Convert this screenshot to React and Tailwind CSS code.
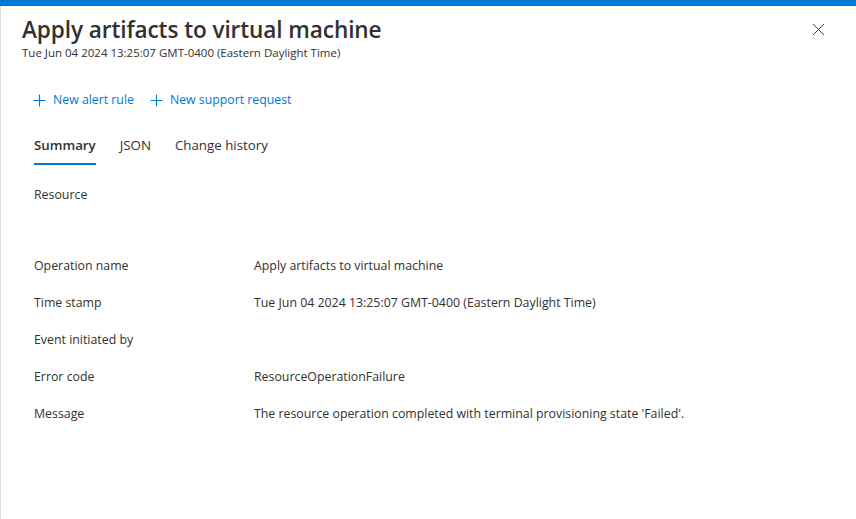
import { X, Plus } from 'lucide-react';

const ROWS = [
  ['Operation name', 'Apply artifacts to virtual machine'],
  ['Time stamp', 'Tue Jun 04 2024 13:25:07 GMT-0400 (Eastern Daylight Time)'],
  ['Event initiated by', ''],
  ['Error code', 'ResourceOperationFailure'],
  ['Message', "The resource operation completed with terminal provisioning state 'Failed'."],
];

export default function App() {
  return (
    <div className="w-[856px] h-[519px] overflow-hidden bg-white text-[#323130]" style={{ fontFamily: '"Open Sans", "Noto Sans", sans-serif' }}>
      <div className="h-[6px] bg-[#0078d4]" />
      <div className="h-[513px] border-l border-[#e1dfdd] flex flex-col">
        {/* header */}
        <div className="flex items-start justify-between pl-[21px] pr-[27px] pt-[9px]">
          <div>
            <h1 className="text-[22.6px] leading-[30px] font-semibold tracking-[-0.1px]">Apply artifacts to virtual machine</h1>
            <div className="text-[11.5px] leading-[14px] mt-[1px] text-[#323130]">Tue Jun 04 2024 13:25:07 GMT-0400 (Eastern Daylight Time)</div>
          </div>
          <button className="mt-[4px] text-[#323130]">
            <X size={21} strokeWidth={1.05} />
          </button>
        </div>

        {/* commands */}
        <div className="flex items-center gap-[13px] pl-[29px] mt-[31px] text-[12.3px] text-[#0078d4]">
          <span className="flex items-center gap-[4px]"><Plus size={19} strokeWidth={1.4} />New alert rule</span>
          <span className="flex items-center gap-[4px]"><Plus size={19} strokeWidth={1.4} />New support request</span>
        </div>

        {/* tabs */}
        <div className="flex gap-[24px] pl-[33px] mt-[26px] text-[13.3px]">
          <div className="font-semibold pb-[7px] border-b-2 border-[#0078d4]">Summary</div>
          <div className="pb-[7px]">JSON</div>
          <div className="pb-[7px]">Change history</div>
        </div>

        {/* summary */}
        <div className="pl-[33px] text-[12.35px]">
          <div className="mt-[21px] leading-[18px]">Resource</div>
          <div className="mt-[53px] flex flex-col gap-[19px]">
            {ROWS.map(([label, value]) => (
              <div key={label} className="flex leading-[18px]">
                <div className="w-[220px] shrink-0">{label}</div>
                <div>{value}</div>
              </div>
            ))}
          </div>
        </div>
      </div>
    </div>
  );
}
